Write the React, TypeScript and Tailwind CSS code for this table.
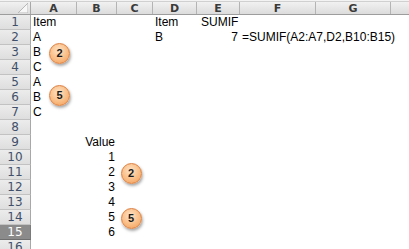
import React from "react";

const COLS = [46, 40, 36, 44, 43, 76, 75, 60];
const LETTERS = ["A", "B", "C", "D", "E", "F", "G", ""];

type Cell = { text: string; align?: "l" | "r"; pad?: string };
type RowData = Record<number, Cell>;

const rows: RowData[] = [
  { 0: { text: "Item" }, 3: { text: "Item" }, 4: { text: "SUMIF", pad: "pl-[4px]" } },
  { 0: { text: "A" }, 3: { text: "B" }, 4: { text: "7", align: "r" }, 5: { text: "=SUMIF(A2:A7,D2,B10:B15)" } },
  { 0: { text: "B" } },
  { 0: { text: "C" } },
  { 0: { text: "A" } },
  { 0: { text: "B" } },
  { 0: { text: "C" } },
  {},
  { 1: { text: "Value", align: "r" } },
  { 1: { text: "1", align: "r" } },
  { 1: { text: "2", align: "r" } },
  { 1: { text: "3", align: "r" } },
  { 1: { text: "4", align: "r" } },
  { 1: { text: "5", align: "r" } },
  { 1: { text: "6", align: "r" } },
  {},
];

function Badge({ n, x, y }: { n: string; x: number; y: number }) {
  return (
    <div
      className="absolute w-[21px] h-[21px] rounded-full border border-[#dd7f3e] bg-[radial-gradient(circle_at_45%_35%,#fee4c8_0%,#f9bd85_55%,#f29a52_100%)] shadow-[1px_2px_3px_rgba(0,0,0,0.35)] flex items-center justify-center text-[11px] font-semibold text-[#1a1a1a] font-['Liberation_Sans',sans-serif] leading-none"
      style={{ left: x - 10.5, top: y - 10.5 }}
    >
      {n}
    </div>
  );
}

export default function App() {
  return (
    <div className="relative w-[409px] h-[249px] overflow-hidden bg-white font-['Liberation_Sans',Arial,sans-serif] text-[12px] text-black">
      <div className="h-[2px] bg-[#f3f3f3] border-b border-[#d0d0d0]" />
      <div className="flex h-[13px] bg-[linear-gradient(#f1f1f1,#dcdcdc)] border-b border-[#9d9d9d]">
        <div className="w-[31px] shrink-0 border-r border-[#a8a8a8] relative">
          <svg className="absolute right-[2px] bottom-[1px]" width="10" height="10" viewBox="0 0 10 10">
            <polygon points="10,0 10,10 0,10" fill="#f7f7f7" stroke="#b8b8b8" strokeWidth="1" />
          </svg>
        </div>
        {COLS.map((w, i) => (
          <div
            key={i}
            className="shrink-0 border-r border-[#b4b4b4] flex items-center justify-center text-[11px] font-bold text-[#3a3a3a] leading-none font-['DejaVu_Sans',sans-serif]"
            style={{ width: w }}
          >
            {LETTERS[i]}
          </div>
        ))}
      </div>
      {rows.map((r, ri) => {
        const selected = ri === 14;
        return (
          <div key={ri} className="flex h-[15px]">
            <div
              className={
                selected
                  ? "w-[31px] shrink-0 border-r border-[#7a7a7a] border-b border-b-[#6f6f6f] bg-[#8b8b8b] text-white flex items-center justify-center text-[12px] leading-none font-['DejaVu_Sans',sans-serif]"
                  : "w-[31px] shrink-0 border-r border-[#a8a8a8] border-b border-b-[#c2c2c2] bg-[linear-gradient(#ececec,#dedede)] text-[#41506a] flex items-center justify-center text-[12px] leading-none font-['DejaVu_Sans',sans-serif]"
              }
            >
              {ri + 1}
            </div>
            {COLS.map((w, ci) => {
              const c = r[ci];
              return (
                <div
                  key={ci}
                  className={
                    "shrink-0 relative leading-[15px] whitespace-nowrap " +
                    (c?.align === "r" ? "text-right pr-[2px] " : "text-left pl-[2px] ") +
                    (c?.pad ?? "")
                  }
                  style={{ width: w }}
                >
                  {c ? <span className="relative z-10">{c.text}</span> : null}
                </div>
              );
            })}
          </div>
        );
      })}
      <Badge n="2" x={59.5} y={53} />
      <Badge n="5" x={59.5} y={95.5} />
      <Badge n="2" x={131} y={173.5} />
      <Badge n="5" x={131} y={218} />
    </div>
  );
}
